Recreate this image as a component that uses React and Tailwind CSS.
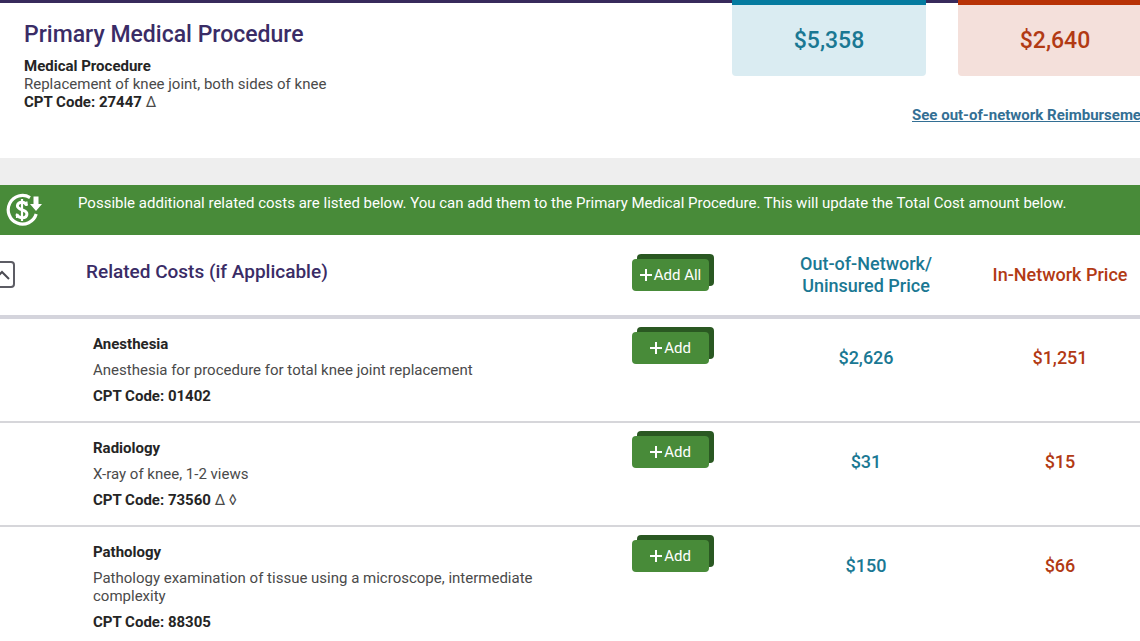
import { useState } from 'react';

const relatedCosts = [
    {
        name: 'Anesthesia',
        description: 'Anesthesia for procedure for total knee joint replacement',
        code: '01402',
        marks: '',
        outOfNetwork: '$2,626',
        inNetwork: '$1,251',
    },
    {
        name: 'Radiology',
        description: 'X-ray of knee, 1-2 views',
        code: '73560',
        marks: 'Δ ◊',
        outOfNetwork: '$31',
        inNetwork: '$15',
    },
    {
        name: 'Pathology',
        description: 'Pathology examination of tissue using a microscope, intermediate complexity',
        code: '88305',
        marks: '',
        outOfNetwork: '$150',
        inNetwork: '$66',
    },
];

function SavingsIcon() {
    return (
        <svg viewBox="0 0 36 34" className="w-9 h-[34px] shrink-0" fill="none" aria-hidden="true">
            <path d="M24 4.6A14.3 14.3 0 1 0 30.2 21" stroke="#fff" strokeWidth="3.2" />
            <path d="M27.5 3.500h5v7.500h3.500L30 18l-6-7h3.500z" fill="#fff" />
            <path
                d="M20.6 12.500c-.8-2-2.400-3.200-4.600-3.200-2.700 0-4.600 1.300-4.600 3.500 0 4.800 9.500 3.300 9.500 8.100 0 2.400-2 3.800-4.900 3.800-2.600 0-4.500-1.300-5.300-3.400"
                stroke="#fff"
                strokeWidth="3"
            />
            <path d="M20.800 8.500v4.500M10.700 20.500v4.500" stroke="#fff" strokeWidth="1.500" />
            <path d="M16 6v22" stroke="#fff" strokeWidth="2.200" />
        </svg>
    );
}

function AddButton({ label }) {
    return (
        <button
            type="button"
            className="flex items-center justify-center gap-0.5 w-[77px] h-8 rounded bg-[#488b39] text-white text-[15px] whitespace-nowrap shadow-[5px_-5px_0_#2a5822]"
        >
            <svg viewBox="0 0 12 12" className="w-3 h-3 shrink-0" stroke="currentColor" strokeWidth="2" aria-hidden="true">
                <path d="M6 0v12M0 6h12" />
            </svg>
            {label}
        </button>
    );
}

export default function App() {
    const [open, setOpen] = useState(true);

    return (
        <div className="min-h-screen overflow-hidden bg-white font-['Roboto',sans-serif] text-[15px] leading-[18px] text-[#4a4a4a]">
            <section className="flex h-[158px] border-t-[3px] border-[#382a5c]">
                <div className="flex-1 pl-6 pt-[17px]">
                    <h1 className="mb-2 text-[23px] leading-[29px] font-medium text-[#3a2c66]">Primary Medical Procedure</h1>
                    <h2 className="font-bold text-[#252525]">Medical Procedure</h2>
                    <p>Replacement of knee joint, both sides of knee</p>
                    <p>
                        <strong className="text-[#252525]">CPT Code: 27447</strong> Δ
                    </p>
                </div>
                <div className="-mt-[3px] -mr-3 w-[420px] shrink-0">
                    <div className="flex gap-8 text-[23px] font-medium">
                        <div className="flex-1 h-[76px] flex items-center justify-center rounded-b border-t-[5px] border-[#047ba0] bg-[#daecf2] text-[#1a7893]">
                            $5,358
                        </div>
                        <div className="flex-1 h-[76px] flex items-center justify-center rounded-b border-t-[5px] border-[#b83206] bg-[#f4e0db] text-[#b23a14]">
                            $2,640
                        </div>
                    </div>
                    <a href="#reimbursement" className="block ml-[180px] mt-[30px] font-bold whitespace-nowrap underline text-[#336f94]">
                        See out-of-network Reimbursement
                    </a>
                </div>
            </section>

            <div className="h-[27px] bg-[#eeeeee]" />

            <div className="flex gap-9 pl-1.5 pt-2 h-[50px] bg-[#488b39] text-white">
                <SavingsIcon />
                <p className="pt-px">
                    Possible additional related costs are listed below. You can add them to the Primary Medical Procedure. This will update the Total Cost amount below.
                </p>
            </div>

            <table className="w-full table-fixed">
                <colgroup>
                    <col />
                    <col className="w-[136px]" />
                    <col className="w-[196px]" />
                    <col className="w-[176px]" />
                </colgroup>
                <thead>
                    <tr className="h-[82px] border-b-4 border-[#d4d4dc] text-lg leading-[22px]">
                        <th scope="col" className="text-left align-top">
                            <div className="flex pt-[26px]">
                                <button
                                    type="button"
                                    aria-label="Toggle related costs"
                                    aria-expanded={open}
                                    onClick={() => setOpen(!open)}
                                    className="-ml-3 flex items-center justify-center w-[27px] h-[27px] rounded-sm border-2 border-[#5c5c64]"
                                >
                                    <svg viewBox="0 0 16 10" className="w-4 h-2.5" fill="none" stroke="#4a4a52" strokeWidth="2" aria-hidden="true">
                                        <path d="M1 9l7-7 7 7" />
                                    </svg>
                                </button>
                                <span className="ml-[71px] text-[19px] font-medium text-[#3a2c66]">Related Costs (if Applicable)</span>
                            </div>
                        </th>
                        <th scope="col" className="pt-6 align-top font-normal">
                            <AddButton label="Add All" />
                        </th>
                        <th scope="col" className="font-medium text-[#1a7893]">
                            Out-of-Network/
                            <br />
                            Uninsured Price
                        </th>
                        <th scope="col" className="pl-4 font-medium text-[#b23a14]">In-Network Price</th>
                    </tr>
                </thead>
                <tbody>
                    {open && relatedCosts.map((item) => (
                        <tr key={item.code} className="border-b-2 border-[#d6d6da] align-top">
                            <td className="pl-[93px] pr-16 py-4">
                                <h3 className="font-bold text-[#252525]">{item.name}</h3>
                                <p className="my-2">{item.description}</p>
                                <p>
                                    <strong className="text-[#252525]">CPT Code: {item.code}</strong> {item.marks}
                                </p>
                            </td>
                            <td className="pt-[13px]">
                                <AddButton label="Add" />
                            </td>
                            <td className="pt-7 text-center text-lg leading-[22px] font-medium text-[#1a7893]">{item.outOfNetwork}</td>
                            <td className="pt-7 pl-4 text-center text-lg leading-[22px] font-medium text-[#b23a14]">{item.inNetwork}</td>
                        </tr>
                    ))}
                </tbody>
            </table>
        </div>
    );
}
